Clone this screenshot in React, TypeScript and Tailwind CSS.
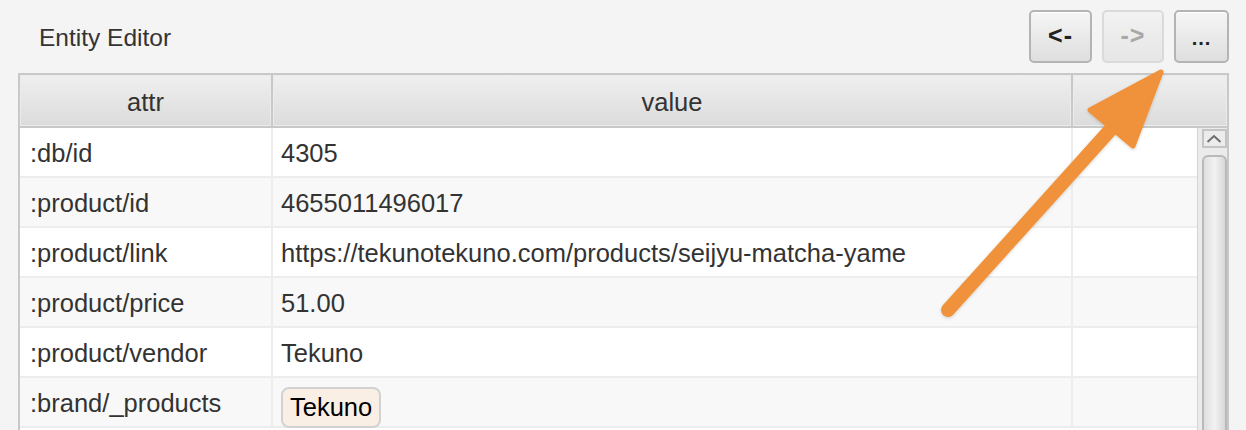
import React from "react";

const rows: { attr: string; value: string; badge?: boolean }[] = [
  { attr: ":db/id", value: "4305" },
  { attr: ":product/id", value: "4655011496017" },
  { attr: ":product/link", value: "https://tekunotekuno.com/products/seijyu-matcha-yame" },
  { attr: ":product/price", value: "51.00" },
  { attr: ":product/vendor", value: "Tekuno" },
  { attr: ":brand/_products", value: "Tekuno", badge: true },
];

function Btn({ label, w, disabled, small }: { label: string; w: string; disabled?: boolean; small?: boolean }) {
  return (
    <div
      className={
        "h-[53px] rounded-[5px] border-2 flex items-center justify-center " +
        w +
        (small ? " text-[20px] pt-[6px]" : " text-[25px]") +
        (disabled
          ? " border-[#dadada] bg-gradient-to-b from-[#f2f2f2] to-[#e6e6e6] text-[#a8a8a8]"
          : " border-[#b4b4b4] bg-gradient-to-b from-[#f6f6f6] to-[#dedede] text-[#222] shadow-[inset_0_1px_0_#ffffff]")
      }
    >
      <span className="leading-none -mt-[3px] font-bold tracking-[1px]">{label}</span>
    </div>
  );
}

function HeaderCell({ children, w }: { children?: React.ReactNode; w: string }) {
  return (
    <div
      className={
        "h-full flex items-center justify-center pt-[3px] bg-gradient-to-b from-[#efefef] to-[#dcdcdc] border border-[#ececec] text-[25.5px] text-[#333] " +
        w
      }
    >
      {children}
    </div>
  );
}

export default function App() {
  return (
    <div
      className="relative w-[1246px] h-[430px] overflow-hidden bg-[#f4f4f4] text-[#333]"
      style={{ fontFamily: '"Liberation Sans", Arial, sans-serif' }}
    >
      {/* top bar */}
      <div className="h-[73px] flex items-start justify-between pl-[39px] pr-[17px]">
        <div className="mt-[24px] text-[24.5px] leading-[28px] text-[#333]">Entity Editor</div>
        <div className="mt-[10px] flex gap-[10px]">
          <Btn label="<-" w="w-[63px]" />
          <Btn label="->" w="w-[62px]" disabled />
          <Btn label="..." w="w-[55px]" small />
        </div>
      </div>

      {/* table */}
      <div className="ml-[18px] w-[1211px] border-x-2 border-t-2 border-[#c8c8c8] bg-white">
        {/* header */}
        <div className="h-[53px] flex bg-[#c8c8c8] gap-[2px] border-b-2 border-[#c8c8c8]">
          <HeaderCell w="w-[251px]">attr</HeaderCell>
          <HeaderCell w="w-[798px]">value</HeaderCell>
          <HeaderCell w="flex-1" />
        </div>
        {/* body */}
        <div className="flex">
          <div className="flex-1">
            {rows.map((r, i) => (
              <div
                key={i}
                className={
                  "h-[50px] flex border-b-2 border-[#ededed] " + (i % 2 === 1 ? "bg-[#f8f8f8]" : "bg-white")
                }
              >
                <div className="w-[253px] pl-[10px] pt-[3px] flex items-center text-[25.5px] text-[#333] border-r-2 border-[#ededed]">
                  {r.attr}
                </div>
                <div className="w-[800px] pl-[8px] pt-[3px] flex items-center text-[25.5px] text-[#333] border-r-2 border-[#ededed]">
                  {r.badge ? (
                    <span className="mt-[7px] h-[41px] px-[7px] flex items-center rounded-[8px] border-2 border-[#d2d2d2] bg-[#faefe5] text-black">
                      {r.value}
                    </span>
                  ) : (
                    r.value
                  )}
                </div>
                <div className="flex-1" />
              </div>
            ))}
          </div>
          {/* scrollbar */}
          <div className="w-[30px] h-[310px] bg-[#ebebeb] border-l border-[#d4d4d4] flex flex-col items-center pt-[1px]">
            <div className="w-[25px] h-[20px] ml-[3px] border-2 border-[#c4c4c4] bg-[#ececec] flex items-center justify-center">
              <svg width="16" height="9" viewBox="0 0 16 9">
                <path d="M1.5 8 L8 2 L14.5 8" fill="none" stroke="#6e6e6e" strokeWidth="2" />
              </svg>
            </div>
            <div className="mt-[7px] ml-[3px] w-[25px] h-[300px] rounded-t-[6px] border-2 border-[#b9b9b9] bg-gradient-to-r from-[#dedede] via-[#f2f2f2] to-[#d8d8d8]" />
          </div>
        </div>
      </div>

      {/* orange arrow annotation */}
      <svg className="absolute left-0 top-0 pointer-events-none" width="1246" height="430" viewBox="0 0 1246 430">
        <defs>
          <filter id="sh" x="-10%" y="-10%" width="120%" height="120%">
            <feDropShadow dx="0" dy="1" stdDeviation="1.5" floodColor="#000" floodOpacity="0.18" />
          </filter>
        </defs>
        <g filter="url(#sh)" fill="#f0923a" stroke="#f0923a" strokeLinejoin="round">
          <line x1="948" y1="310" x2="1112" y2="128" strokeWidth="14" strokeLinecap="round" />
          <polygon points="1090,110 1161,72 1133,146" strokeWidth="5" />
        </g>
      </svg>
    </div>
  );
}
